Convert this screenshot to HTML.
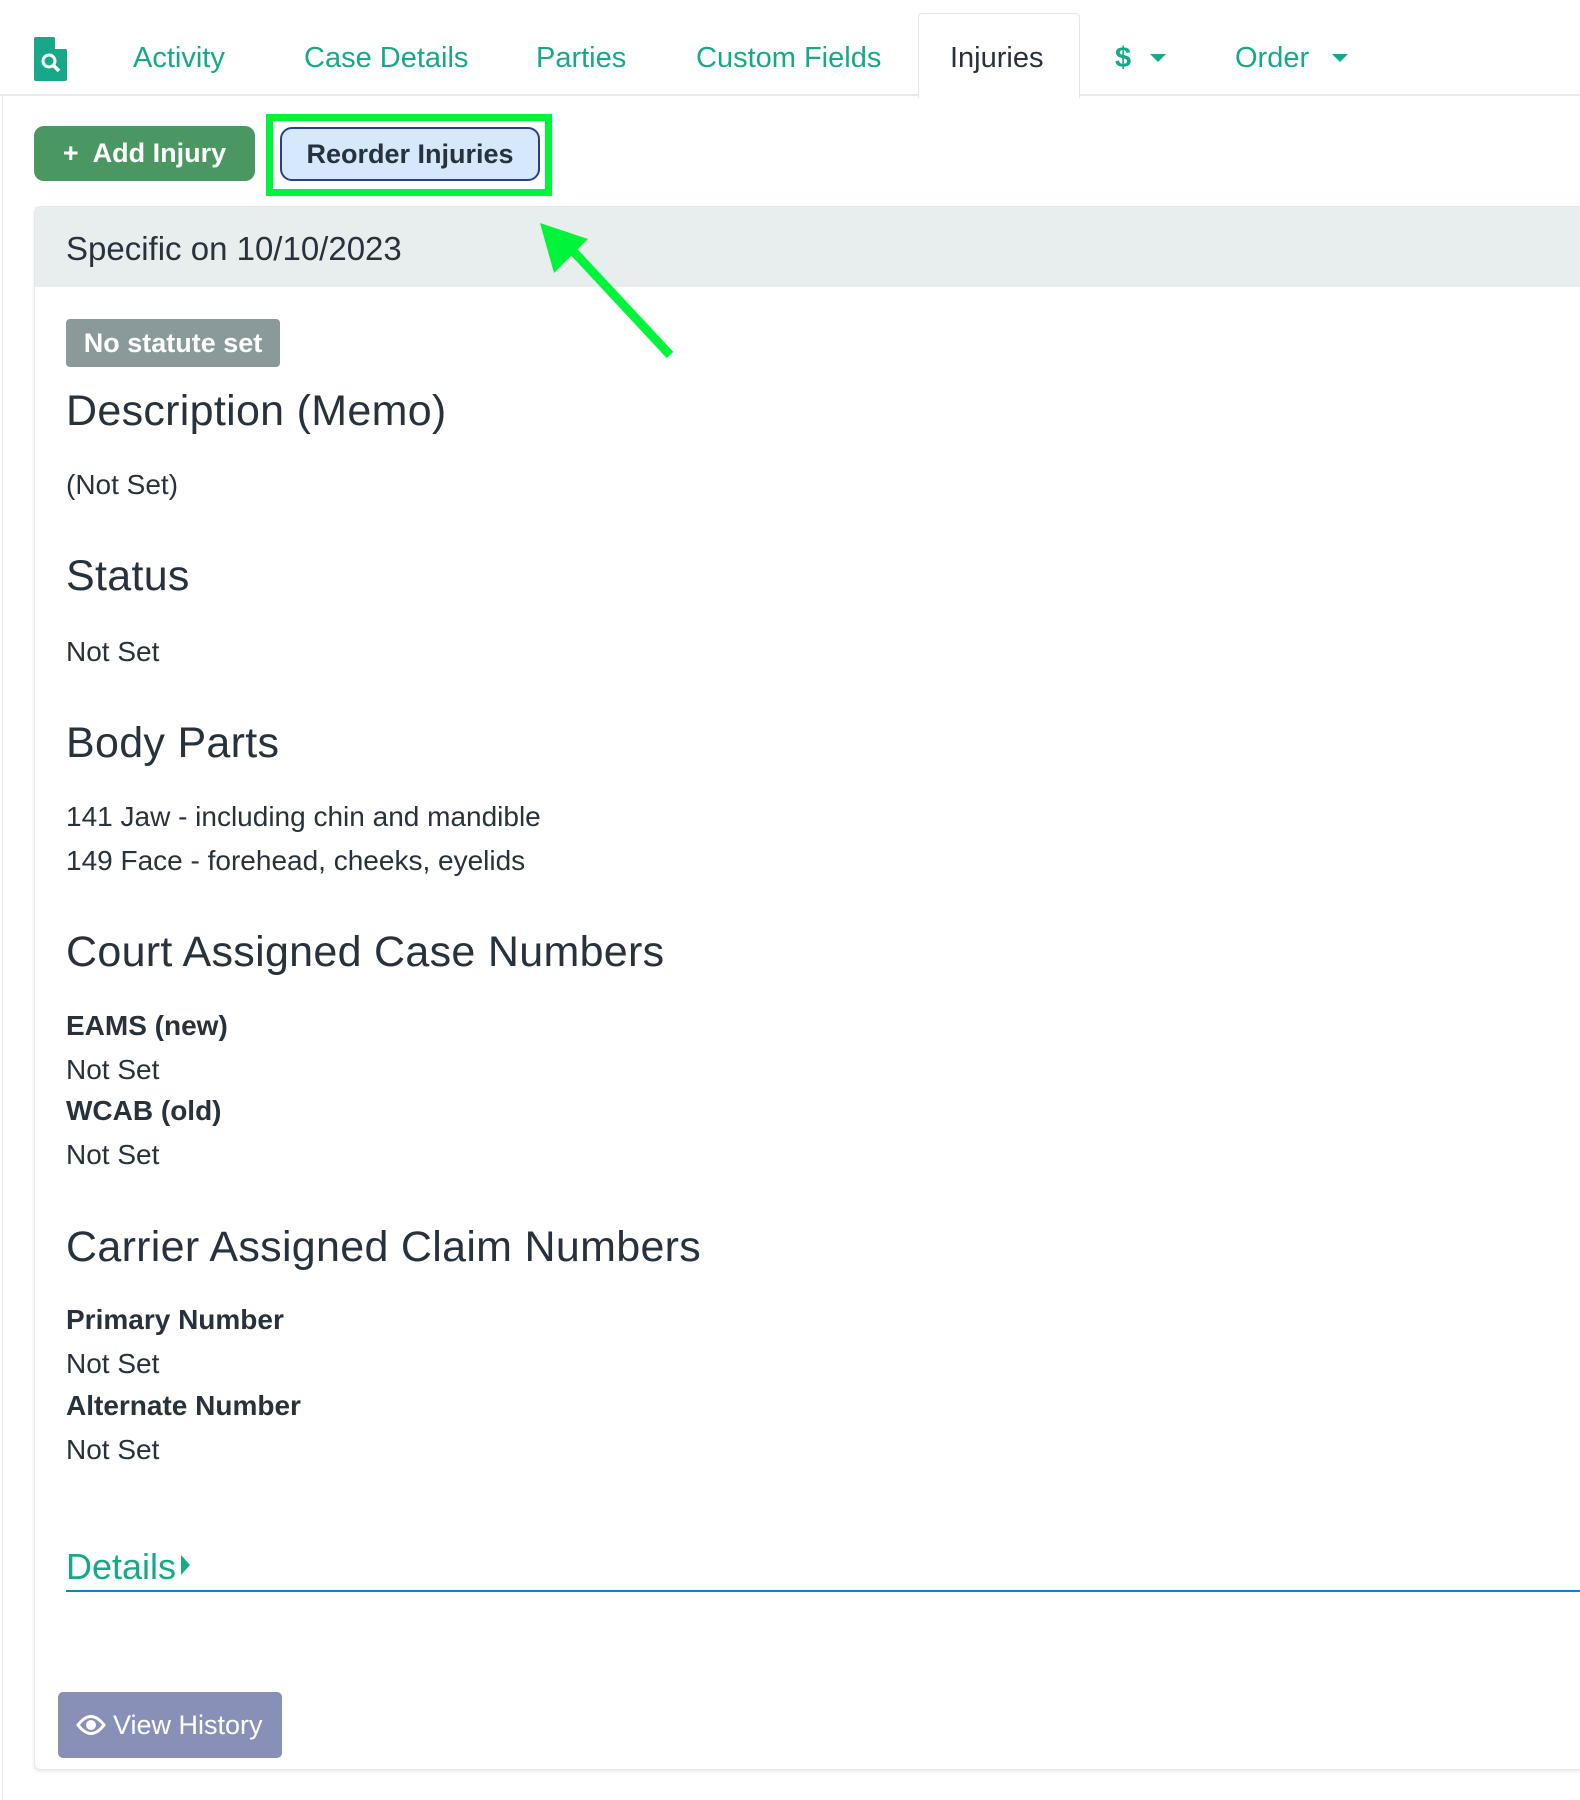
<!DOCTYPE html>
<html><head><style>
body{margin:0;width:1580px;height:1800px;background:#fff;font-family:"Liberation Sans",sans-serif;color:#27323d;position:relative;overflow:hidden}
.a{position:absolute;white-space:nowrap}
.nav{font-size:29px;color:#17a88a;top:42px}
h{position:absolute;font-size:43px;left:66px;white-space:nowrap;line-height:1;letter-spacing:0.3px}
.t{position:absolute;font-size:28px;left:66px;white-space:nowrap;line-height:1}
b.t{font-weight:bold}
</style></head><body>
<div class="a" style="left:2px;top:95px;width:1px;height:1705px;background:#e3e8e8"></div>
<div class="a" style="left:0;top:94px;width:1580px;height:2px;background:#e6eaea"></div>
<svg class="a" style="left:34px;top:37px" width="33" height="44" viewBox="0 0 33 44"><path d="M0 2Q0 0 2 0H20L33 13V42Q33 44 31 44H2Q0 44 0 42Z" fill="#17a88a"/><path d="M21 0V12H33" fill="#fff"/><circle cx="15" cy="24" r="6" fill="none" stroke="#fff" stroke-width="3"/><path d="M19 28L25 34" stroke="#fff" stroke-width="3.5"/></svg>
<div class="a nav" style="left:133px">Activity</div>
<div class="a nav" style="left:304px">Case Details</div>
<div class="a nav" style="left:536px">Parties</div>
<div class="a nav" style="left:696px">Custom Fields</div>
<div class="a" style="left:918px;top:13px;width:160px;height:84px;border:1px solid #e3e8e8;border-bottom:none;background:#fff;border-radius:4px 4px 0 0"></div>
<div class="a nav" style="left:950px;color:#27323d">Injuries</div>
<div class="a nav" style="left:1115px;font-weight:bold">$</div>
<div class="a" style="left:1150px;top:54px;border:8px solid transparent;border-top:8px solid #17a88a;border-bottom:none"></div>
<div class="a nav" style="left:1235px">Order</div>
<div class="a" style="left:1332px;top:54px;border:8px solid transparent;border-top:8px solid #17a88a;border-bottom:none"></div>

<div class="a" style="left:34px;top:126px;width:221px;height:55px;background:#4a9762;border-radius:10px;color:#fff;font-weight:bold;font-size:27px;line-height:55px;text-align:center">+&nbsp; Add Injury</div>
<div class="a" style="left:266px;top:114px;width:272px;height:68px;border:7px solid #00f53a"></div>
<div class="a" style="left:280px;top:127px;width:260px;height:54px;box-sizing:border-box;border:2px solid #2b3e8e;background:#d6e8fb;border-radius:12px;color:#27323d;font-weight:bold;font-size:27px;line-height:50px;text-align:center">Reorder Injuries</div>

<div class="a" style="left:34px;top:206px;width:1560px;height:1562px;border:1px solid #e3e8e8;border-radius:6px;box-shadow:0 2px 3px rgba(0,0,0,.08)"></div>
<div class="a" style="left:35px;top:207px;width:1560px;height:80px;background:#e8eeee"></div>
<div class="a" style="left:66px;top:230px;font-size:33px">Specific on 10/10/2023</div>
<svg class="a" style="left:530px;top:215px" width="150" height="150"><path d="M140 140L30 22" stroke="#00f53a" stroke-width="9"/><path d="M10 8L58 24L24 58Z" fill="#00f53a"/></svg>

<div class="a" style="left:66px;top:319px;width:214px;height:48px;background:#8a9a9a;border-radius:4px;color:#fff;font-weight:bold;font-size:27px;line-height:48px;text-align:center">No statute set</div>
<h style="top:390px">Description (Memo)</h>
<div class="t" style="top:471px">(Not Set)</div>
<h style="top:555px">Status</h>
<div class="t" style="top:638px">Not Set</div>
<h style="top:722px">Body Parts</h>
<div class="t" style="top:803px">141 Jaw - including chin and mandible</div>
<div class="t" style="top:847px">149 Face - forehead, cheeks, eyelids</div>
<h style="top:931px">Court Assigned Case Numbers</h>
<b class="t" style="top:1012px">EAMS (new)</b>
<div class="t" style="top:1056px">Not Set</div>
<b class="t" style="top:1097px">WCAB (old)</b>
<div class="t" style="top:1141px">Not Set</div>
<h style="top:1226px">Carrier Assigned Claim Numbers</h>
<b class="t" style="top:1306px">Primary Number</b>
<div class="t" style="top:1350px">Not Set</div>
<b class="t" style="top:1392px">Alternate Number</b>
<div class="t" style="top:1436px">Not Set</div>
<div class="a" style="left:66px;top:1546px;font-size:36px;color:#17a88a">Details</div>
<div class="a" style="left:181px;top:1555px;border:10px solid transparent;border-left:9px solid #17a88a;border-right:none"></div>
<div class="a" style="left:66px;top:1590px;width:1520px;height:2px;background:#0a86c4"></div>
<div class="a" style="left:58px;top:1692px;width:224px;height:66px;background:#8890b8;border-radius:5px;color:#fff;font-size:27px;line-height:66px">
<svg style="position:absolute;left:18px;top:22px" width="30" height="22" viewBox="0 0 30 22"><path d="M2 11Q15 -6 28 11Q15 28 2 11Z" fill="none" stroke="#fff" stroke-width="3"/><circle cx="15" cy="11" r="5" fill="#fff"/></svg>
<span style="position:absolute;left:55px">View History</span></div>
</body></html>
